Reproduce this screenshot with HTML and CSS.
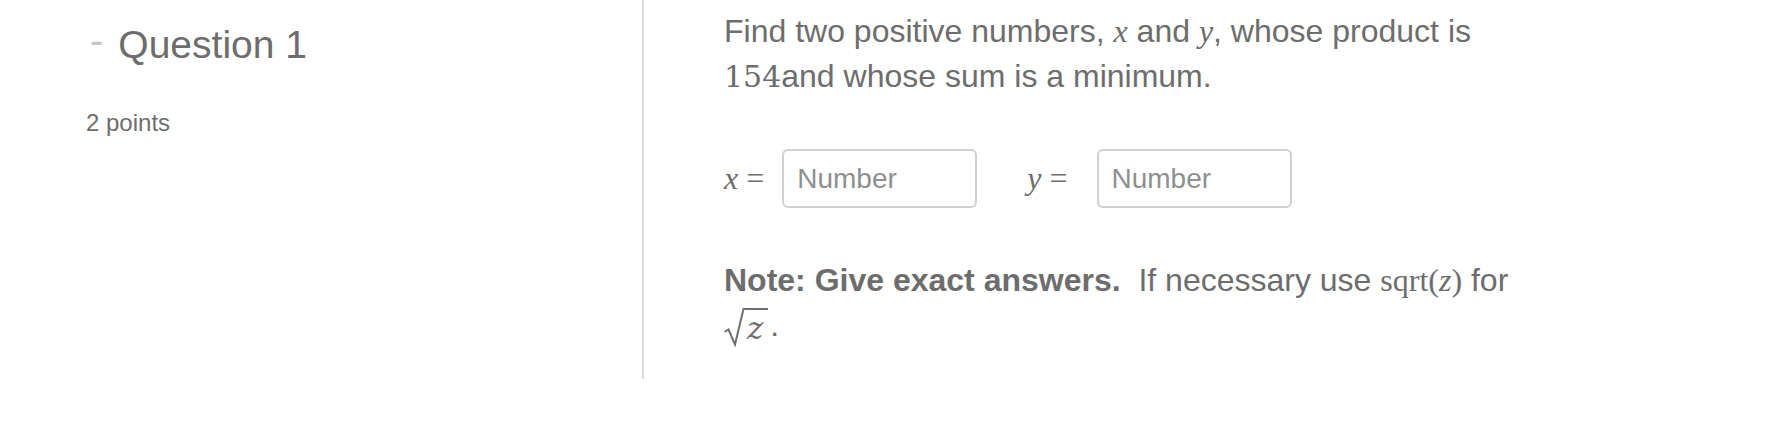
FILE: index.html
```html
<!DOCTYPE html>
<html lang="en">
<head>
<meta charset="utf-8">
<title>Question 1</title>
<link rel="stylesheet" href="styles.css">
</head>
<body>
<div class="question">
  <div class="info">
    <h2 class="title"><span class="toggle">-</span><span class="title-text">Question 1</span></h2>
    <div class="points">2 points</div>
  </div>
  <div class="content">
    <p class="prompt">Find two positive numbers, <span class="mi">x</span> and <span class="mi">y</span>, whose product is <span class="num">154</span>and whose sum is a minimum.</p>
    <div class="answers">
      <label class="field field-x"><span class="math"><span class="mi">x</span><span class="mo">=</span></span><input class="box" type="text" placeholder="Number"></label>
      <label class="field field-y"><span class="math"><span class="mi">y</span><span class="mo">=</span></span><input class="box" type="text" placeholder="Number"></label>
    </div>
    <p class="note"><strong>Note: Give exact answers.</strong>&nbsp; If necessary use <span class="mn">sqrt(<span class="mi">z</span>)</span> for <span class="sqrt"><svg class="radical" width="21" height="39" viewBox="0 0 21 39" aria-hidden="true"><path d="M0.5 24 L4.5 21.5 L11 36.5 L19.5 1 L21 1" fill="none" stroke="#6f6f6f" stroke-width="2" stroke-linejoin="miter"/></svg><span class="radicand"><span class="zi">z</span></span></span><span class="dot">.</span></p>
  </div>
</div>
</body>
</html>
```

FILE: styles.css
```css
html, body {
  margin: 0;
  padding: 0;
  background: #ffffff;
}

body {
  font-family: "Liberation Sans", Arial, sans-serif;
  color: #6d6d6d;
}

.question {
  display: flex;
  align-items: flex-start;
}

.info {
  box-sizing: border-box;
  width: 644px;
  height: 379px;
  padding: 23px 0 0 84px;
  border-right: 2px solid #dcdcdc;
  flex-shrink: 0;
}

.title {
  margin: 0;
  font-weight: normal;
  font-size: 39px;
  line-height: 44px;
  display: flex;
  align-items: flex-start;
}

.toggle {
  font-size: 40px;
  line-height: 40px;
  color: #c6c6c6;
  margin: -3px 15px 0 6px;
}

.points {
  margin-top: 41px;
  margin-left: 2px;
  font-size: 24px;
  line-height: 30px;
}

.content {
  padding: 9px 0 0 80px;
  font-size: 32px;
  line-height: 45px;
}

.prompt {
  margin: 0;
  width: 800px;
}

.mi {
  font-family: "Liberation Serif", "Times New Roman", serif;
  font-style: italic;
}

.mn {
  font-family: "Liberation Serif", "Times New Roman", serif;
}

.num {
  font-family: "DejaVu Serif", "Liberation Serif", serif;
  font-size: 30px;
}

.mo {
  font-family: "Liberation Serif", "Times New Roman", serif;
  margin-left: 8px;
}

.answers {
  display: flex;
  gap: 50px;
  margin-top: 50px;
}

.field {
  display: flex;
  align-items: center;
}

.field-x {
  gap: 18px;
}

.field-y {
  gap: 29px;
}

.box {
  box-sizing: border-box;
  width: 195px;
  height: 59px;
  border: 2px solid #d0d0d0;
  border-radius: 6px;
  padding: 0 0 0 13px;
  font-family: "Liberation Sans", Arial, sans-serif;
  font-size: 28px;
  color: #6d6d6d;
  background: #ffffff;
  outline: none;
}

.box::placeholder {
  color: #8f8f8f;
}

.note {
  margin: 50px 0 0 0;
  width: 800px;
}

.note strong {
  font-weight: bold;
}

.sqrt {
  display: inline-flex;
  align-items: flex-start;
  vertical-align: -11px;
  height: 39px;
}

.radical {
  display: block;
}

.radicand {
  border-top: 2px solid #6f6f6f;
  padding: 0 5px 0 2px;
  line-height: 36px;
}

.zi {
  font-family: "DejaVu Serif", "Liberation Serif", serif;
  font-style: italic;
  font-size: 31px;
}

.dot {
  margin-left: 2px;
}
```
